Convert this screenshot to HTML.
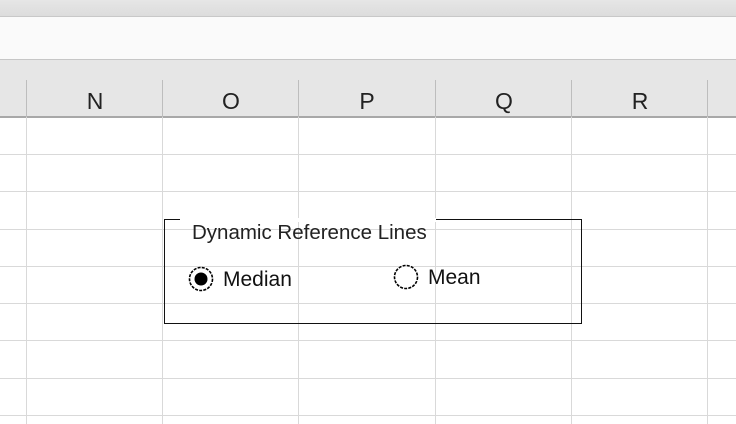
<!DOCTYPE html>
<html><head><style>
*{margin:0;padding:0;box-sizing:border-box}
body{width:736px;height:424px;overflow:hidden;background:#fff;position:relative;font-family:"Segoe UI","Liberation Sans","DejaVu Sans",sans-serif}
.a{position:absolute}
.h{position:absolute;left:0;width:736px;height:1px;background:#d9d9d9}
.v{position:absolute;top:117px;width:1px;height:307px;background:#d9d9d9}
.hs{position:absolute;top:80px;width:1px;height:37px;background:#bdbdbd}
.col{position:absolute;top:88px;font-size:23px;color:#222;text-align:center;width:136px}
</style></head><body>
<div class="a" style="left:0;top:0;width:736px;height:16px;background:linear-gradient(#e6e6e6,#dcdcdc)"></div>
<div class="a" style="left:0;top:16px;width:736px;height:1px;background:#c8c8c8"></div>
<div class="a" style="left:0;top:17px;width:736px;height:42px;background:#fafafa"></div>
<div class="a" style="left:0;top:59px;width:736px;height:1px;background:#c6c6c6"></div>
<div class="a" style="left:0;top:60px;width:736px;height:57px;background:#e6e6e6"></div>
<div class="a" style="left:0;top:116px;width:736px;height:2px;background:#a8a8a8"></div>
<div class="hs" style="left:26px"></div><div class="hs" style="left:162px"></div><div class="hs" style="left:298px"></div><div class="hs" style="left:435px"></div><div class="hs" style="left:571px"></div><div class="hs" style="left:707px"></div>
<div class="col" style="left:27px">N</div><div class="col" style="left:163px">O</div><div class="col" style="left:299px">P</div><div class="col" style="left:436px">Q</div><div class="col" style="left:572px">R</div>
<div class="h" style="top:154px"></div><div class="h" style="top:191px"></div><div class="h" style="top:229px"></div><div class="h" style="top:266px"></div><div class="h" style="top:303px"></div><div class="h" style="top:340px"></div><div class="h" style="top:378px"></div><div class="h" style="top:415px"></div>
<div class="v" style="left:26px"></div><div class="v" style="left:162px"></div><div class="v" style="left:298px"></div><div class="v" style="left:435px"></div><div class="v" style="left:571px"></div><div class="v" style="left:707px"></div>
<div class="a" style="left:164px;top:219px;width:418px;height:105px;border:1px solid #111"></div>
<div class="a" style="left:180px;top:218px;width:256px;height:4px;background:#fff"></div>
<div class="a" style="left:192px;top:221px;font-size:20.5px;color:#222;white-space:nowrap">Dynamic Reference Lines</div>
<svg class="a" style="left:187px;top:265px" width="28" height="28"><circle cx="14" cy="14" r="11.5" fill="#fff" stroke="#000" stroke-width="1.6" stroke-dasharray="3 1.2"/><circle cx="14" cy="14" r="6.5" fill="#000"/></svg>
<div class="a" style="left:223px;top:268px;font-size:21px;color:#111">Median</div>
<svg class="a" style="left:392px;top:263px" width="28" height="28"><circle cx="14" cy="14" r="11.5" fill="#fff" stroke="#000" stroke-width="1.6" stroke-dasharray="3 1.2"/></svg>
<div class="a" style="left:428px;top:266px;font-size:21px;color:#111">Mean</div>
</body></html>
